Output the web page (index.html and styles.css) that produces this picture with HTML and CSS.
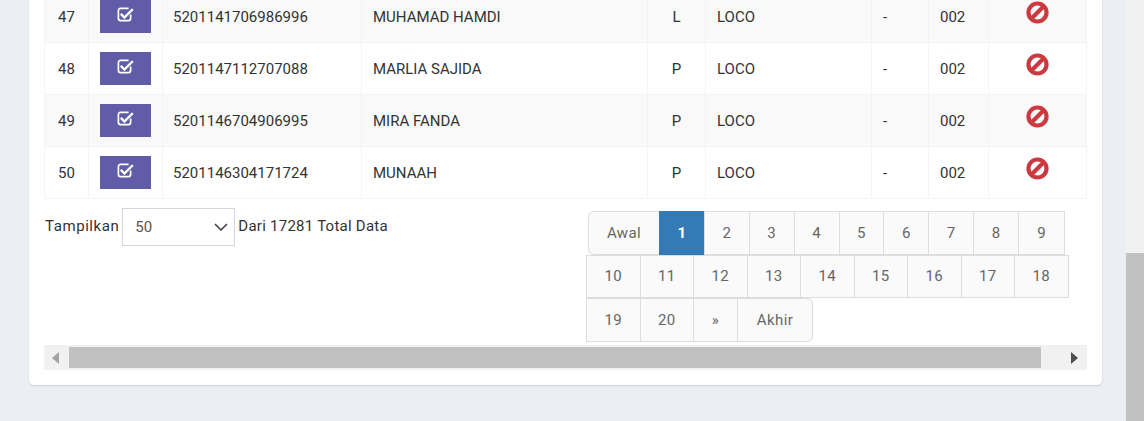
FILE: index.html
```html
<!DOCTYPE html>
<html lang="id">
<head>
<meta charset="utf-8">
<title>Data</title>
<link rel="stylesheet" href="styles.css">
</head>
<body>
<svg class="defs" width="0" height="0" aria-hidden="true">
  <symbol id="check" viewBox="0 0 18 16">
    <path d="M13.6 8.6v4a2 2 0 0 1-2 2H3.4a2 2 0 0 1-2-2V4.4a2 2 0 0 1 2-2h8.2" fill="none" stroke="currentColor" stroke-width="1.7"/>
    <path d="M4.6 6.8 7.4 9.6 15 2l1.9 1.9-9.5 9.5L2.7 8.7z" fill="currentColor" stroke="#605ca8" stroke-width=".6"/>
  </symbol>
  <symbol id="ban" viewBox="0 0 24 24">
    <circle cx="12" cy="12" r="9.4" fill="none" stroke="currentColor" stroke-width="4.4"/>
    <path d="M5.5 18.5 18.5 5.5" stroke="currentColor" stroke-width="4.4"/>
  </symbol>
</svg>
<main class="page">
  <section class="card">
    <div class="scroller">
      <table class="grid">
        <colgroup>
          <col class="c-no"><col class="c-act"><col class="c-nik"><col class="c-name"><col class="c-jk"><col class="c-loc"><col class="c-dash"><col class="c-code"><col class="c-ban">
        </colgroup>
        <tbody>
          <tr class="odd">
            <td class="center">47</td>
            <td class="center"><button class="edit"><svg class="edit-icon"><use href="#check"/></svg></button></td>
            <td class="nik">5201141706986996</td><td>MUHAMAD HAMDI</td><td class="center">L</td><td>LOCO</td><td>-</td><td>002</td>
            <td class="center top"><svg class="ban"><use href="#ban"/></svg></td>
          </tr>
          <tr>
            <td class="center">48</td>
            <td class="center"><button class="edit"><svg class="edit-icon"><use href="#check"/></svg></button></td>
            <td class="nik">5201147112707088</td><td>MARLIA SAJIDA</td><td class="center">P</td><td>LOCO</td><td>-</td><td>002</td>
            <td class="center top"><svg class="ban"><use href="#ban"/></svg></td>
          </tr>
          <tr class="odd">
            <td class="center">49</td>
            <td class="center"><button class="edit"><svg class="edit-icon"><use href="#check"/></svg></button></td>
            <td class="nik">5201146704906995</td><td>MIRA FANDA</td><td class="center">P</td><td>LOCO</td><td>-</td><td>002</td>
            <td class="center top"><svg class="ban"><use href="#ban"/></svg></td>
          </tr>
          <tr>
            <td class="center">50</td>
            <td class="center"><button class="edit"><svg class="edit-icon"><use href="#check"/></svg></button></td>
            <td class="nik">5201146304171724</td><td>MUNAAH</td><td class="center">P</td><td>LOCO</td><td>-</td><td>002</td>
            <td class="center top"><svg class="ban"><use href="#ban"/></svg></td>
          </tr>
        </tbody>
      </table>
      <div class="footer">
        <div class="length">
          <span class="label">Tampilkan</span>
          <div class="select">
            <span>50</span>
            <svg class="chevron" viewBox="0 0 14 8"><path d="M1 1l6 6 6-6" fill="none" stroke="currentColor" stroke-width="1.6"/></svg>
          </div>
          <span class="total">Dari 17281 Total Data</span>
        </div>
        <nav class="pagination">
          <a class="first">Awal</a><a class="active">1</a><a>2</a><a>3</a><a>4</a><a>5</a><a>6</a><a>7</a><a>8</a><a class="ninth">9</a>
          <a class="wide">10</a><a class="wide">11</a><a class="wide">12</a><a class="wide">13</a><a class="wide">14</a><a class="wide">15</a><a class="wide">16</a><a class="wide">17</a><a class="wide">18</a>
          <a class="wide">19</a><a class="wide">20</a><a class="next">»</a><a class="last">Akhir</a>
        </nav>
      </div>
      <div class="hbar">
        <span class="arrow-left"></span>
        <div class="hthumb"></div>
        <span class="arrow-right"></span>
      </div>
    </div>
  </section>
  <div class="vbar"><div class="vthumb"></div></div>
</main>
</body>
</html>
```
FILE: styles.css
```css
* { box-sizing: border-box; }
html, body { margin: 0; height: 421px; overflow: hidden; }
body {
  background: #ebeef3;
  font-family: "Roboto", "Noto Sans", sans-serif;
  font-size: 15px;
  color: #333;
}
.defs { display: block; height: 0; }
.page { display: flex; height: 421px; overflow: hidden; }
.card {
  align-self: flex-end;
  margin: 0 24px 36px 29px;
  width: 1073px;
  flex: none;
  padding: 0 15px 15px;
  background: #fff;
  border-radius: 0 0 5px 5px;
  box-shadow: 0 1px 2px rgba(0, 0, 0, .13);
}
.scroller { width: 1043px; }
.grid {
  width: 1042px;
  table-layout: fixed;
  border-collapse: collapse;
  border-spacing: 0;
}
.c-no { width: 44px; }
.c-act { width: 74px; }
.c-nik { width: 199px; }
.c-name { width: 286px; }
.c-jk { width: 58px; }
.c-loc { width: 166px; }
.c-dash { width: 57px; }
.c-code { width: 60px; }
.c-ban { width: 98px; }
.grid td {
  height: 52px;
  padding: 0 11px;
  border: 1px solid #f4f4f4;
  vertical-align: middle;
  line-height: 20px;
}
.grid td.nik { padding-left: 10px; }
.grid td.center { text-align: center; padding: 0; }
.grid td.top { vertical-align: top; padding-top: 10px; }
.odd { background: #f9f9f9; }
.edit {
  display: inline-flex;
  align-items: center;
  justify-content: center;
  width: 51px;
  height: 33px;
  padding: 0 0 5px;
  border: 0;
  background: #605ca8;
  color: #fff;
  vertical-align: middle;
}
.edit-icon { width: 18px; height: 16px; }
.ban { display: block; width: 23px; height: 23px; margin: 0 auto; color: #cb3a40; filter: blur(.7px); }
.footer { display: flex; height: 147px; padding: 9px 0 0 1px; }
.length { display: flex; align-items: flex-start; gap: 3px; width: 542px; flex: none; line-height: 36px; }
.label { letter-spacing: .57px; }
.total { letter-spacing: .25px; }
.select {
  display: flex;
  align-items: center;
  justify-content: space-between;
  width: 113px;
  height: 38px;
  padding: 0 6px 0 12px;
  border: 1px solid #d2d6de;
  color: #555;
}
.chevron { width: 14px; height: 8px; color: #444; }
.pagination {
  display: flex;
  flex-wrap: wrap;
  align-content: flex-start;
  width: 486px;
  padding-top: 3px;
}
.pagination a {
  display: flex;
  align-items: center;
  justify-content: center;
  width: 45.9px;
  height: 43.6px;
  margin-left: -1px;
  background: #fafafa;
  border: 1px solid #ddd;
  color: #666;
  letter-spacing: .4px;
}
.pagination a:first-child { margin-left: 1px; }
.pagination .wide { width: 54.5px; }
.pagination .first { width: 72px; border-radius: 6px 0 0 6px; }
.pagination .ninth { width: 47px; }
.pagination .next { width: 45px; }
.pagination .last { width: 76px; border-radius: 0 6px 6px 0; }
.pagination .active { background: #337ab7; border-color: #337ab7; color: #fff; font-weight: 700; }
.hbar {
  display: flex;
  align-items: center;
  height: 25px;
  margin-top: -1px;
  padding-left: 8px;
  background: #f1f1f1;
}
.hthumb { width: 972px; height: 21px; margin-left: 11px; margin-right: 30px; background: #c1c1c1; }
.arrow-left { width: 0; height: 0; margin-right: -1px; border: 6px solid transparent; border-left: 0; border-right: 7px solid #a3a3a3; }
.arrow-right { width: 0; height: 0; border: 6px solid transparent; border-right: 0; border-left: 7px solid #505050; }
.vbar { flex: none; width: 18px; height: 421px; background: #f1f1f1; }
.vthumb { height: 168px; margin-top: 253px; background: #c1c1c1; }
```
